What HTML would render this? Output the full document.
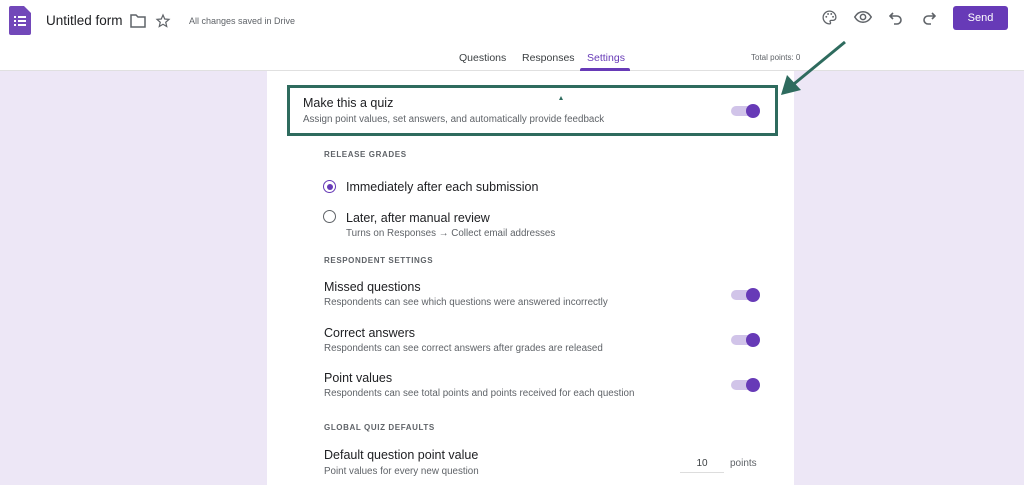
<!DOCTYPE html>
<html><head><style>
body{margin:0;width:1024px;height:485px;overflow:hidden;background:#ede7f6;font-family:"Liberation Sans",Arial,sans-serif;position:relative;color:#202124}
.a{position:absolute;white-space:nowrap}
.hdr{position:absolute;left:0;top:0;width:1024px;height:70px;background:#fff;border-bottom:1px solid #e0e0e0}
.panel{position:absolute;left:267px;top:71px;width:527px;height:414px;background:#fff}
.t{font-size:12.5px;color:#202124}
.s{font-size:9.8px;color:#5f6368}
.h{font-size:8px;color:#5f6368;letter-spacing:.6px;font-weight:bold}
.tog{position:absolute;width:26px;height:10px;border-radius:5px;background:#d1c4e9}
.tog:after{content:"";position:absolute;right:-3px;top:-2px;width:14px;height:14px;border-radius:50%;background:#673ab7}
</style></head><body>
<div class="hdr"></div>
<div class="panel"></div>
<svg class="a" style="left:9px;top:6px" width="22" height="29" viewBox="0 0 22 29"><path d="M2 0h13l7 7v20a2 2 0 0 1-2 2H2a2 2 0 0 1-2-2V2a2 2 0 0 1 2-2z" fill="#7248b9"/><g fill="#fff"><rect x="5" y="10" width="2" height="2"/><rect x="9" y="10" width="8" height="2"/><rect x="5" y="14" width="2" height="2"/><rect x="9" y="14" width="8" height="2"/><rect x="5" y="18" width="2" height="2"/><rect x="9" y="18" width="8" height="2"/></g></svg>
<div class="a" style="left:46px;top:13px;font-size:13.5px">Untitled form</div>
<svg class="a" style="left:130px;top:14px" width="16" height="14" viewBox="0 0 16 14"><path d="M1 1h5l2 2h7v10H1z" fill="none" stroke="#5f6368" stroke-width="1.5"/></svg>
<svg class="a" style="left:155px;top:13px" width="16" height="16" viewBox="0 0 24 24"><path d="M12 3l2.6 6 6.4.6-4.9 4.3 1.5 6.3L12 16.9 6.4 20.2l1.5-6.3L3 9.6 9.4 9z" fill="none" stroke="#5f6368" stroke-width="1.8"/></svg>
<div class="a" style="left:189px;top:16px;font-size:9px;color:#5f6368">All changes saved in Drive</div>
<svg class="a" style="left:821px;top:9px" width="17" height="17" viewBox="0 0 24 24"><path d="M12 3a9 9 0 0 0 0 18c1 0 1.5-.8 1.5-1.5 0-1-.8-1.3-.8-2.2 0-.8.7-1.3 1.5-1.3H17a4 4 0 0 0 4-4c0-5-4-9-9-9z" fill="none" stroke="#5f6368" stroke-width="1.8"/><circle cx="7.5" cy="11" r="1.3" fill="#5f6368"/><circle cx="10" cy="7" r="1.3" fill="#5f6368"/><circle cx="14.5" cy="7" r="1.3" fill="#5f6368"/><circle cx="17" cy="11" r="1.3" fill="#5f6368"/></svg>
<svg class="a" style="left:854px;top:10px" width="18" height="14" viewBox="0 0 24 18"><path d="M1 9c3-5 7-7 11-7s8 2 11 7c-3 5-7 7-11 7S4 14 1 9z" fill="none" stroke="#5f6368" stroke-width="2"/><circle cx="12" cy="9" r="3.5" fill="none" stroke="#5f6368" stroke-width="2"/></svg>
<svg class="a" style="left:889px;top:11px" width="14" height="14" viewBox="0 0 14 14"><path d="M4 2L1 5l3 3M1 5h7a4 4 0 0 1 0 8H5" fill="none" stroke="#5f6368" stroke-width="1.6"/></svg>
<svg class="a" style="left:922px;top:11px" width="14" height="14" viewBox="0 0 14 14"><path d="M10 2l3 3-3 3M13 5H6a4 4 0 0 0 0 8h3" fill="none" stroke="#5f6368" stroke-width="1.6"/></svg>
<div class="a" style="left:953px;top:6px;width:55px;height:24px;background:#673ab7;border-radius:3px;color:#fff;font-size:11px;text-align:center;line-height:24px">Send</div>
<div class="a" style="left:459px;top:52px;font-size:10.5px;color:#3c4043">Questions</div>
<div class="a" style="left:522px;top:52px;font-size:10.5px;color:#3c4043">Responses</div>
<div class="a" style="left:587px;top:52px;font-size:10.5px;color:#673ab7">Settings</div>
<div class="a" style="left:580px;top:68px;width:50px;height:3px;background:#673ab7;border-radius:2px 2px 0 0"></div>
<div class="a" style="left:751px;top:53px;font-size:8px;color:#5f6368">Total points: 0</div>
<div class="a" style="left:287px;top:85px;width:485px;height:45px;border:3px solid #2e6b5e"></div>
<div class="a t" style="left:303px;top:96px">Make this a quiz</div>
<div class="a s" style="left:303px;top:114px">Assign point values, set answers, and automatically provide feedback</div>
<div class="a" style="left:559px;top:96px;width:0;height:0;border-left:2px solid transparent;border-right:2px solid transparent;border-bottom:4px solid #2e6b5e"></div>
<div class="tog" style="left:731px;top:106px"></div>
<svg class="a" style="left:775px;top:38px" width="75" height="62"><line x1="70" y1="4" x2="14" y2="50" stroke="#2e6b5e" stroke-width="3"/><path d="M6 57l6-20 14 15z" fill="#2e6b5e"/></svg>
<div class="a h" style="left:324px;top:150px">RELEASE GRADES</div>
<div class="a" style="left:323px;top:180px;width:11px;height:11px;border:1.5px solid #673ab7;border-radius:50%"></div>
<div class="a" style="left:327px;top:184px;width:6px;height:6px;background:#673ab7;border-radius:50%"></div>
<div class="a t" style="left:346px;top:180px">Immediately after each submission</div>
<div class="a" style="left:323px;top:210px;width:11px;height:11px;border:1.5px solid #5f6368;border-radius:50%"></div>
<div class="a t" style="left:346px;top:211px">Later, after manual review</div>
<div class="a s" style="left:346px;top:228px">Turns on Responses → Collect email addresses</div>
<div class="a h" style="left:324px;top:256px">RESPONDENT SETTINGS</div>
<div class="a t" style="left:324px;top:280px">Missed questions</div>
<div class="a s" style="left:324px;top:297px">Respondents can see which questions were answered incorrectly</div>
<div class="tog" style="left:731px;top:290px"></div>
<div class="a t" style="left:324px;top:326px">Correct answers</div>
<div class="a s" style="left:324px;top:343px">Respondents can see correct answers after grades are released</div>
<div class="tog" style="left:731px;top:335px"></div>
<div class="a t" style="left:324px;top:371px">Point values</div>
<div class="a s" style="left:324px;top:388px">Respondents can see total points and points received for each question</div>
<div class="tog" style="left:731px;top:380px"></div>
<div class="a h" style="left:324px;top:423px">GLOBAL QUIZ DEFAULTS</div>
<div class="a t" style="left:324px;top:448px">Default question point value</div>
<div class="a s" style="left:324px;top:466px">Point values for every new question</div>
<div class="a" style="left:680px;top:458px;width:44px;text-align:center;font-size:10px;color:#3c4043;border-bottom:1px solid #ddd;padding-bottom:3px">10</div>
<div class="a" style="left:730px;top:458px;font-size:10px;color:#5f6368">points</div>
</body></html>
